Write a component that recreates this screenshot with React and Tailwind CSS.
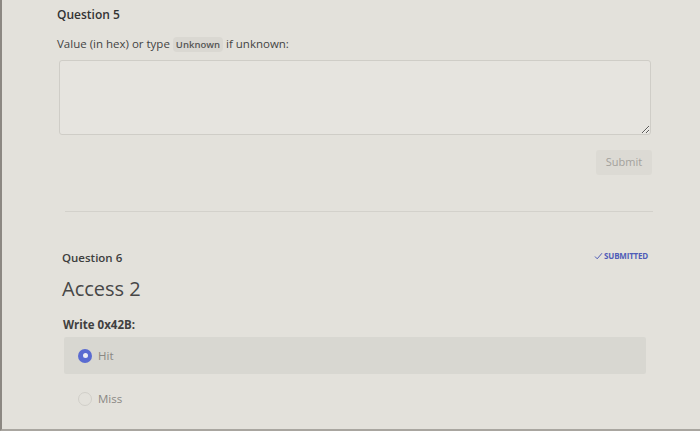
import React, { useState } from 'react';

const App = () => {
  const [answer, setAnswer] = useState('');
  const [choice, setChoice] = useState('hit');

  return (
    <div
      className="relative w-[700px] h-[431px] overflow-hidden bg-[#e3e1db] text-[#3b3b3b] border-l-2 border-l-[#8c8882] border-b-2 border-b-[#a9a6a0]"
      style={{ fontFamily: '"Open Sans", "Noto Sans", sans-serif' }}
    >
      {/* Question 5 */}
      <div className="pl-[55px] pr-[47px] pt-[6px]">
        <h3 className="text-[12px] font-semibold leading-[18px] text-[#333]">Question 5</h3>
        <p className="mt-[11px] text-[11.5px] leading-[18px] text-[#444]">
          Value (in hex) or type{' '}
          <span className="px-[3px] py-[1px] rounded-sm bg-[#dad8d2] text-[9.5px] font-semibold text-[#555]">
            Unknown
          </span>{' '}
          if unknown:
        </p>
        <textarea
          value={answer}
          onChange={(e) => setAnswer(e.target.value)}
          className="mt-[6px] ml-[2px] block w-[592px] h-[75px] rounded-[3px] border border-[#cfcdc7] bg-[#e6e4df] outline-none resize"
        />
        <div className="flex justify-end mt-[15px] pr-[1px]">
          <button className="w-[56px] h-[25px] rounded-[3px] bg-[#dcdad4] text-[11px] text-[#a3a19c]">
            Submit
          </button>
        </div>
        <div className="mt-[36px] ml-[8px] h-px bg-[#d3d1cb]" />
      </div>

      {/* Question 6 */}
      <div className="pl-[60px] pr-[52px] pt-[38px]">
        <div className="flex items-center justify-between">
          <h3 className="text-[11.5px] font-semibold leading-[16px] text-[#3d3d3d]">Question 6</h3>
          <span className="flex items-center gap-[1px] -mt-[5px] text-[8px] font-bold tracking-tight text-[#4f5cb8]">
            <svg width="9" height="8" viewBox="0 0 9 8" fill="none">
              <path d="M1 4.5 L3.2 6.8 L8 1.2" stroke="#4f5cb8" strokeWidth="1" />
            </svg>
            SUBMITTED
          </span>
        </div>
        <h2 className="mt-[10px] text-[20px] leading-[26px] text-[#474747]">Access 2</h2>
        <p className="mt-[15px] ml-[1px] text-[11.5px] font-bold leading-[16px] text-[#404040]">Write 0x42B:</p>

        <div className="mt-[4px] ml-[2px] flex flex-col w-[582px]">
          <label
            onClick={() => setChoice('hit')}
            className={`flex items-center h-[37px] pl-[14px] rounded-[2px] cursor-pointer ${
              choice === 'hit' ? 'bg-[#d8d7d1]' : ''
            }`}
          >
            <span
              className={`w-[14px] h-[14px] rounded-full flex items-center justify-center ${
                choice === 'hit' ? 'bg-[#5a6bd1]' : 'border border-[#cfcdc7]'
              }`}
            >
              {choice === 'hit' && <span className="w-[5px] h-[5px] rounded-full bg-[#eeeef4]" />}
            </span>
            <span className="ml-[6px] text-[11.5px] text-[#8a8884]">Hit</span>
          </label>
          <label
            onClick={() => setChoice('miss')}
            className={`mt-[6px] flex items-center h-[37px] pl-[14px] rounded-[2px] cursor-pointer ${
              choice === 'miss' ? 'bg-[#d8d7d1]' : ''
            }`}
          >
            <span
              className={`w-[14px] h-[14px] rounded-full flex items-center justify-center ${
                choice === 'miss' ? 'bg-[#5a6bd1]' : 'border border-[#d1cfc9]'
              }`}
            >
              {choice === 'miss' && <span className="w-[5px] h-[5px] rounded-full bg-[#eeeef4]" />}
            </span>
            <span className="ml-[6px] text-[11.5px] text-[#8a8884]">Miss</span>
          </label>
        </div>
      </div>
    </div>
  );
};

export default App;
